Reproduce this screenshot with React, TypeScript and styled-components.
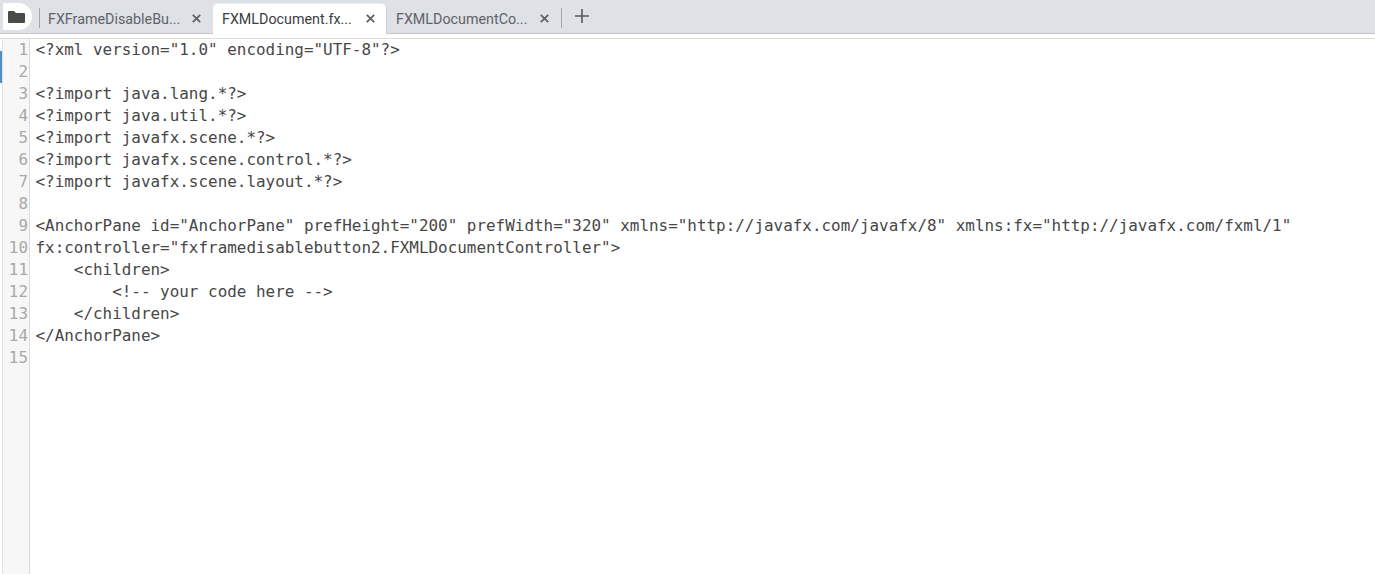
import React from "react";
import styled, { createGlobalStyle } from "styled-components";

const Global = createGlobalStyle`
  html, body { margin: 0; padding: 0; background: #fff; overflow: hidden; }
  #root { width: 1375px; height: 574px; }
`;

const Page = styled.div`
  width: 1375px;
  height: 574px;
  display: flex;
  flex-direction: column;
  overflow: hidden;
  background: #fff;
`;

const TabBar = styled.div`
  height: 33px;
  background: #dee1e6;
  display: flex;
  align-items: flex-end;
  padding-left: 3px;
  border-bottom: 1px solid #c4c6ca;
  flex: none;
`;

const FolderButton = styled.div`
  width: 29px;
  height: 27px;
  background: #fff;
  border-radius: 0 14px 14px 0;
  display: flex;
  align-items: center;
  justify-content: center;
  margin-bottom: 3px;
  margin-right: 7px;
  padding-right: 2px;
  box-sizing: border-box;
  flex: none;
`;

const Divider = styled.div`
  width: 1px;
  height: 20px;
  background: #a3a5a8;
  margin-bottom: 5px;
  flex: none;
`;

const Tab = styled.div<{ $active?: boolean; $width: number; $inset: number }>`
  width: ${(p) => p.$width}px;
  height: 31px;
  box-sizing: border-box;
  display: flex;
  align-items: center;
  justify-content: space-between;
  flex: none;
  padding: 0 12px 0 ${(p) => p.$inset}px;
  font-family: Roboto, "Liberation Sans", sans-serif;
  font-size: 14.3px;
  color: ${(p) => (p.$active ? "#3c4043" : "#5f6368")};
  background: ${(p) => (p.$active ? "#fff" : "transparent")};
  border-radius: 5px 5px 0 0;
  margin-bottom: -1px;
  box-shadow: ${(p) => (p.$active ? "inset -1px 0 0 #cfd1d5, inset 0 1px 0 #eceef0" : "none")};
`;

const TabLabel = styled.span`
  white-space: nowrap;
`;

const CloseIcon = styled.svg`
  width: 9px;
  height: 9px;
  flex: none;
`;

const PlusIcon = styled.svg`
  width: 16px;
  height: 16px;
  margin: 0 0 9px 12px;
  flex: none;
`;

const Editor = styled.div`
  flex: 1;
  display: flex;
  min-height: 0;
  position: relative;
  margin-top: 4px;
  border-top: 1px solid #dcdcdc;
`;

const Marker = styled.div`
  position: absolute;
  left: 0;
  top: 12px;
  width: 2px;
  height: 32px;
  background: #4a90c8;
`;

const Gutter = styled.div`
  width: 26px;
  margin-left: 2px;
  background: #f7f7f7;
  border-left: 1px solid #e0e0e0;
  border-right: 1px solid #dcdcdc;
  flex: none;
`;

const LineNumber = styled.div`
  height: 22px;
  line-height: 22px;
  text-align: right;
  padding-right: 1px;
  font-family: "DejaVu Sans Mono", "Liberation Mono", monospace;
  font-size: 15.9px;
  color: #a8a8a8;
`;

const Code = styled.div`
  flex: 1;
  padding-left: 5.5px;
`;

const CodeLine = styled.div`
  height: 22px;
  line-height: 22px;
  white-space: pre;
  font-family: "DejaVu Sans Mono", "Liberation Mono", monospace;
  font-size: 15.93px;
  color: #474747;
`;

const lines = [
  '<?xml version="1.0" encoding="UTF-8"?>',
  "",
  "<?import java.lang.*?>",
  "<?import java.util.*?>",
  "<?import javafx.scene.*?>",
  "<?import javafx.scene.control.*?>",
  "<?import javafx.scene.layout.*?>",
  "",
  '<AnchorPane id="AnchorPane" prefHeight="200" prefWidth="320" xmlns="http://javafx.com/javafx/8" xmlns:fx="http://javafx.com/fxml/1"',
  'fx:controller="fxframedisablebutton2.FXMLDocumentController">',
  "    <children>",
  "        <!-- your code here -->",
  "    </children>",
  "</AnchorPane>",
  "",
];

const Close = () => (
  <CloseIcon viewBox="0 0 9 9">
    <path d="M0.8 0.8 L8.2 8.2 M8.2 0.8 L0.8 8.2" stroke="#5f6368" strokeWidth="1.8" fill="none" />
  </CloseIcon>
);

export default function App() {
  return (
    <Page>
      <Global />
      <TabBar>
        <FolderButton>
          <svg width="17" height="14" viewBox="0 0 17 14">
            <path d="M0 2 Q0 1 1 1 H6 L8 3 H16 Q17 3 17 4 V12 Q17 13 16 13 H1 Q0 13 0 12 Z" fill="#4a4a4a" />
          </svg>
        </FolderButton>
        <Divider />
        <Tab $width={173} $inset={8}>
          <TabLabel>FXFrameDisableBu...</TabLabel>
          <Close />
        </Tab>
        <Tab $active $width={174} $inset={9}>
          <TabLabel>FXMLDocument.fx...</TabLabel>
          <Close />
        </Tab>
        <Tab $width={174} $inset={9}>
          <TabLabel>FXMLDocumentCo...</TabLabel>
          <Close />
        </Tab>
        <Divider />
        <PlusIcon viewBox="0 0 16 16">
          <path d="M8 1 V15 M1 8 H15" stroke="#585b5f" strokeWidth="1.6" fill="none" />
        </PlusIcon>
      </TabBar>
      <Editor>
        <Marker />
        <Gutter>
          {lines.map((_, i) => (
            <LineNumber key={i}>{i + 1}</LineNumber>
          ))}
        </Gutter>
        <Code>
          {lines.map((l, i) => (
            <CodeLine key={i}>{l}</CodeLine>
          ))}
        </Code>
      </Editor>
    </Page>
  );
}
